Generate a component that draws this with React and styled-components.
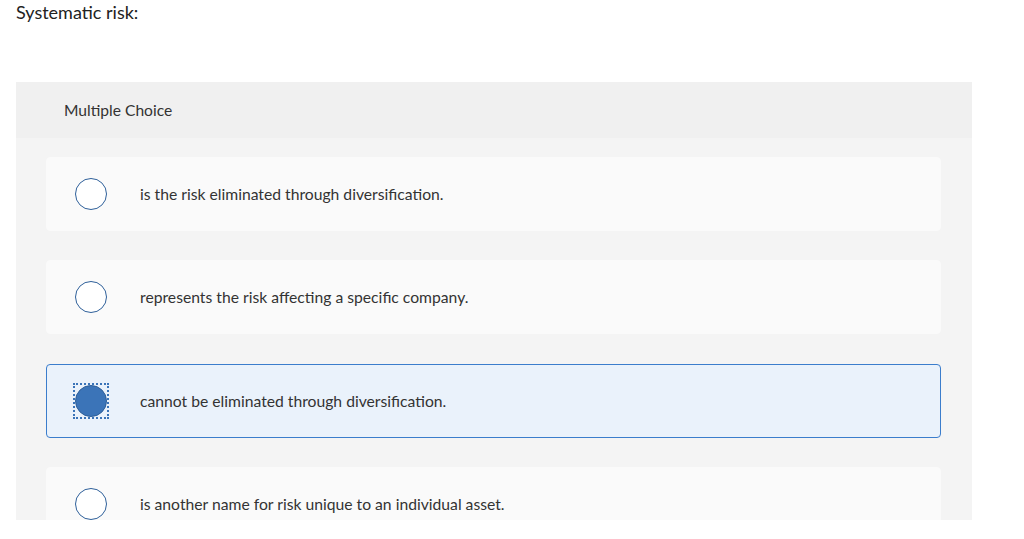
import React from "react";
import styled, { createGlobalStyle } from "styled-components";

const GlobalStyle = createGlobalStyle`
  body {
    margin: 0;
    background: #fff;
    font-family: Lato, "Open Sans", sans-serif;
    color: #333;
  }
`;

const Page = styled.div`
  height: 520px;
  overflow: hidden;
  padding: 0 52px 0 16px;
`;

const Question = styled.div`
  font-size: 18px;
  line-height: 24px;
  height: 82px;
  color: #222;
`;

const Panel = styled.div`
  background: #f4f4f4;
  border-radius: 3px 3px 0 0;
`;

const PanelHeader = styled.div`
  background: #f0f0f0;
  height: 56px;
  display: flex;
  align-items: center;
  padding-left: 48px;
  font-size: 15.6px;
  color: #333;
`;

const Options = styled.div`
  display: flex;
  flex-direction: column;
  gap: 29.4px;
  padding: 19px 31px 40px 30px;
`;

const Option = styled.label`
  display: flex;
  align-items: center;
  height: 74px;
  flex-shrink: 0;
  box-sizing: border-box;
  padding-left: 26px;
  border-radius: 4px;
  background: ${(p) => (p.selected ? "#eaf2fb" : "#fafafa")};
  border: 1px solid ${(p) => (p.selected ? "#3b7dcc" : "#fafafa")};
  font-size: 15.7px;
  color: #333;
  cursor: pointer;
`;

const Focus = styled.span`
  width: 36px;
  height: 36px;
  box-sizing: border-box;
  display: flex;
  align-items: center;
  justify-content: center;
  flex-shrink: 0;
  margin-right: 31px;
  border: 2px dotted ${(p) => (p.active ? "#3b74b8" : "transparent")};
`;

const Radio = styled.span`
  width: 32px;
  height: 32px;
  box-sizing: border-box;
  border-radius: 50%;
  border: 1.5px solid #2f609a;
  background: ${(p) => (p.checked ? "#3b74b8" : "#fff")};
`;

const choices = [
  "is the risk eliminated through diversification.",
  "represents the risk affecting a specific company.",
  "cannot be eliminated through diversification.",
  "is another name for risk unique to an individual asset.",
];

export default function App() {
  const selected = 2;
  return (
    <>
      <GlobalStyle />
      <Page>
        <Question>Systematic risk:</Question>
        <Panel>
          <PanelHeader>Multiple Choice</PanelHeader>
          <Options>
            {choices.map((c, i) => (
              <Option key={i} selected={i === selected}>
                <Focus active={i === selected}>
                  <Radio checked={i === selected} />
                </Focus>
                {c}
              </Option>
            ))}
          </Options>
        </Panel>
      </Page>
    </>
  );
}
